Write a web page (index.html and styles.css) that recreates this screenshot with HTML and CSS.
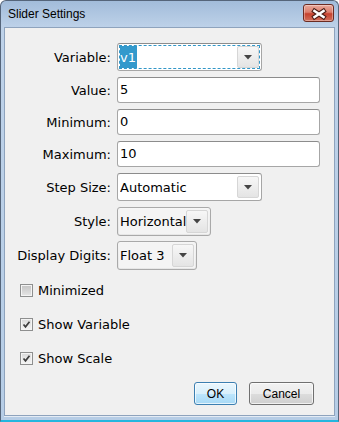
FILE: index.html
```html
<!DOCTYPE html>
<html lang="en">
<head>
  <meta charset="UTF-8" />
  <title>Slider Settings</title>
  <link rel="stylesheet" href="styles.css">
</head>
<body>

  <div class="window">
    <div class="titlebar">
      <span class="title">Slider Settings</span>
      <button class="close" title="Close">
        <svg width="31" height="18" viewBox="0 0 31 18">
          <path d="M11.5 7 L20.5 13 M20.5 7 L11.5 13" stroke="#4a1c14" stroke-width="4.6" stroke-linecap="square" />
          <path d="M11.5 7 L20.5 13 M20.5 7 L11.5 13" stroke="#fff" stroke-width="2.6" stroke-linecap="square" />
        </svg>
      </button>
    </div>

    <div class="client">
      <div class="form">
        <label class="lbl">Variable:</label>
        <div class="combo focus w-var">
          <div class="inner">
            <span class="val"><span class="sel">v1</span></span>
            <span class="drop"><svg width="8" height="5" viewBox="0 0 8 5"><path d="M0 0 H8 L4 4.5 Z" fill="#444" /></svg></span>
          </div>
        </div>

        <label class="lbl">Value:</label>
        <div class="textbox">5</div>

        <label class="lbl">Minimum:</label>
        <div class="textbox">0</div>

        <label class="lbl">Maximum:</label>
        <div class="textbox">10</div>

        <label class="lbl">Step Size:</label>
        <div class="combo w-step">
          <div class="inner">
            <span class="val">Automatic</span>
            <span class="drop"><svg width="8" height="5" viewBox="0 0 8 5"><path d="M0 0 H8 L4 4.5 Z" fill="#444" /></svg></span>
          </div>
        </div>

        <label class="lbl">Style:</label>
        <div class="combo list w-style">
          <div class="inner">
            <span class="val">Horizontal</span>
            <span class="drop"><svg width="8" height="5" viewBox="0 0 8 5"><path d="M0 0 H8 L4 4.5 Z" fill="#444" /></svg></span>
          </div>
        </div>

        <label class="lbl">Display Digits:</label>
        <div class="combo list w-digits">
          <div class="inner">
            <span class="val">Float 3</span>
            <span class="drop"><svg width="8" height="5" viewBox="0 0 8 5"><path d="M0 0 H8 L4 4.5 Z" fill="#444" /></svg></span>
          </div>
        </div>
      </div>

      <div class="checks">
        <div class="check"><span class="box"></span>Minimized</div>
        <div class="check"><span class="box on"><svg width="9" height="9" viewBox="0 0 9 9"><path d="M1.5 4.5 L3.5 6.8 L7.5 1.8" stroke="#3d3d3d" stroke-width="1.7" fill="none" /></svg></span>Show Variable</div>
        <div class="check"><span class="box on"><svg width="9" height="9" viewBox="0 0 9 9"><path d="M1.5 4.5 L3.5 6.8 L7.5 1.8" stroke="#3d3d3d" stroke-width="1.7" fill="none" /></svg></span>Show Scale</div>
      </div>

      <div class="buttons">
        <button class="btn default">OK</button>
        <button class="btn">Cancel</button>
      </div>
    </div>
  </div>

</body>
</html>
```

FILE: styles.css
```css
html, body {
  margin: 0;
  background: #fff;
}
.window {
  box-sizing: border-box;
  width: 339px;
  height: 422px;
  display: flex;
  flex-direction: column;
  padding: 0 3px 4px 3px;
  border: 1px solid #55657a;
  border-bottom: 2px solid #25b6de;
  border-radius: 6px 6px 0 0;
  background: linear-gradient(#a2bcda 0, #bed2e9 27px, #b6cde6 100%);
}
.titlebar {
  height: 26px;
  display: flex;
  justify-content: space-between;
  align-items: flex-start;
  padding: 0 1px 0 4px;
}
.title {
  font-family: "Liberation Sans", Arial, sans-serif;
  font-size: 12px;
  line-height: 26px;
  color: #000;
}
.close {
  margin-top: 3px;
  width: 31px;
  height: 18px;
  padding: 0;
  border: 1px solid #6b2b22;
  border-radius: 3px;
  background: linear-gradient(#e9a99b 0%, #dc7e6d 45%, #c6412d 55%, #d2705c 100%);
  box-shadow: inset 0 0 0 1px rgba(255, 255, 255, 0.35);
  display: flex;
  justify-content: center;
  align-items: center;
}
.close svg {
  display: block;
  margin: -1px;
}
.client {
  flex: 1;
  background: #f0f0f0;
  border: 1px solid #8ea3bd;
  box-shadow: 0 1px 0 #e4ecf5;
  font-family: "DejaVu Sans", Verdana, sans-serif;
  font-size: 13px;
  color: #000;
}
.form {
  display: grid;
  grid-template-columns: 106px 1fr;
  grid-template-rows: 28px 26px 26px 26px 28px 29px 27px;
  column-gap: 6px;
  row-gap: 6px;
  padding: 15px 14px 0 0;
  align-items: center;
}
.lbl {
  text-align: right;
  white-space: nowrap;
}
.textbox {
  box-sizing: border-box;
  height: 26px;
  line-height: 24px;
  padding-left: 2px;
  background: #fff;
  border: 1px solid #a6a6a6;
  border-top-color: #8c8c8c;
  border-radius: 3px;
}
.combo {
  box-sizing: border-box;
  height: 28px;
  padding: 1px;
  background: #fff;
  border: 1px solid #a6a6a6;
  border-top-color: #8c8c8c;
  border-radius: 3px;
}
.combo.list {
  height: 29px;
  background: linear-gradient(#f6f6f6, #e6e6e6);
  border-color: #a9a9a9;
}
.combo.list .inner {
  background: #f4f4f4;
}
.w-digits { height: 27px; }
.w-var, .w-step { width: 145px; }
.w-style { width: 94px; }
.w-digits { width: 80px; }
.inner {
  box-sizing: border-box;
  height: 100%;
  display: flex;
  align-items: stretch;
  border: 1px solid transparent;
}
.focus .inner {
  border: 1px dashed #3297c8;
}
.val {
  flex: 1;
  display: flex;
  align-items: center;
  white-space: nowrap;
  overflow: hidden;
  padding-left: 0;
}
.sel {
  background: #3399cc;
  color: #fff;
  height: 100%;
  display: flex;
  align-items: center;
  padding: 0 1px;
  margin-left: -1px;
}
.drop {
  box-sizing: border-box;
  width: 22px;
  display: flex;
  justify-content: center;
  align-items: center;
  background: linear-gradient(#f7f7f7, #e4e4e4);
  border: 1px solid #d6d6d6;
  border-radius: 2px;
}
.drop svg {
  display: block;
}
.checks {
  display: flex;
  flex-direction: column;
  gap: 20px;
  margin-top: 14px;
  padding-left: 15px;
}
.check {
  height: 14px;
  display: flex;
  align-items: center;
  gap: 5px;
  white-space: nowrap;
}
.box {
  box-sizing: border-box;
  width: 13px;
  height: 13px;
  border: 1px solid #8e8f8f;
  box-shadow: inset 0 0 0 1px #f4f4f4;
  background: linear-gradient(#c3c3c3, #e6e6e6);
  display: flex;
  justify-content: center;
  align-items: center;
}
.box.on {
  background: linear-gradient(#d9d9d9, #f6f6f6);
}
.box svg {
  display: block;
}
.buttons {
  display: flex;
  justify-content: flex-end;
  gap: 12px;
  margin-top: 17px;
  padding-right: 20px;
}
.btn {
  box-sizing: border-box;
  height: 23px;
  padding: 0;
  font-family: "Liberation Sans", Arial, sans-serif;
  font-size: 12px;
  color: #000;
  border: 1px solid #707070;
  border-radius: 3px;
  background: linear-gradient(#f2f2f2 0%, #ebebeb 50%, #dddddd 50%, #cfcfcf 100%);
  box-shadow: inset 0 0 0 1px rgba(255, 255, 255, 0.7);
  width: 65px;
}
.btn.default {
  width: 43px;
  border-color: #3c7fb1;
  background: linear-gradient(#eaf6fd 0%, #d9f0fc 50%, #bee6fd 50%, #a7d9f5 100%);
}
```
